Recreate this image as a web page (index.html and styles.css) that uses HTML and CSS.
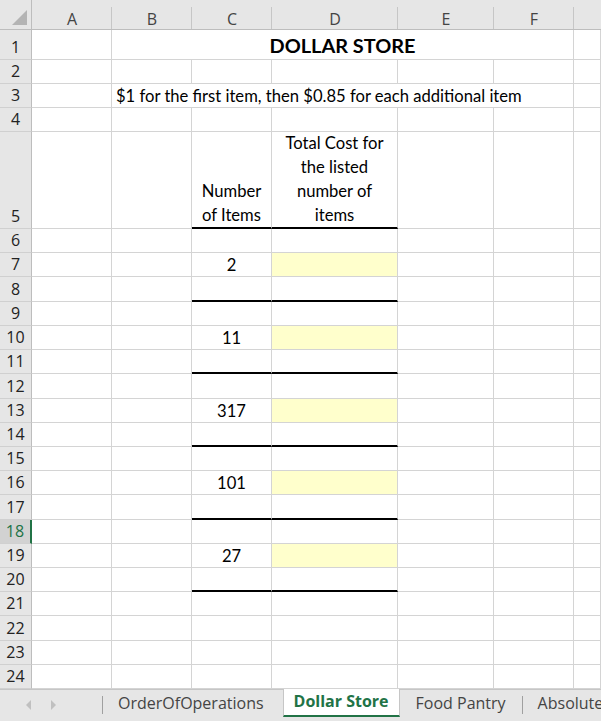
FILE: index.html
```html
<!DOCTYPE html>
<html>
<head>
<meta charset="utf-8">
<link rel="stylesheet" href="styles.css">
</head>
<body>
<div class="sheet">
  <div class="corner"><span class="tri"></span></div>
  <div class="ch">A</div><div class="ch">B</div><div class="ch">C</div><div class="ch">D</div><div class="ch">E</div><div class="ch">F</div><div class="ch last"></div>

  <div class="rh">1</div><div class="c"></div><div class="c title">DOLLAR STORE</div><div class="c"></div>
  <div class="rh">2</div><div class="c"></div><div class="c"></div><div class="c"></div><div class="c"></div><div class="c"></div><div class="c"></div><div class="c"></div>
  <div class="rh">3</div><div class="c"></div><div class="c note">$1 for the first item, then $0.85 for each additional item</div><div class="c"></div>
  <div class="rh">4</div><div class="c"></div><div class="c"></div><div class="c"></div><div class="c"></div><div class="c"></div><div class="c"></div><div class="c"></div>
  <div class="rh">5</div><div class="c"></div><div class="c"></div><div class="c wrap bot">Number of Items</div><div class="c wrap bot">Total Cost for the listed number of items</div><div class="c"></div><div class="c"></div><div class="c"></div>
  <div class="rh">6</div><div class="c"></div><div class="c"></div><div class="c"></div><div class="c"></div><div class="c"></div><div class="c"></div><div class="c"></div>
  <div class="rh">7</div><div class="c"></div><div class="c"></div><div class="c num">2</div><div class="c yel"></div><div class="c"></div><div class="c"></div><div class="c"></div>
  <div class="rh">8</div><div class="c"></div><div class="c"></div><div class="c bot"></div><div class="c bot"></div><div class="c"></div><div class="c"></div><div class="c"></div>
  <div class="rh">9</div><div class="c"></div><div class="c"></div><div class="c"></div><div class="c"></div><div class="c"></div><div class="c"></div><div class="c"></div>
  <div class="rh">10</div><div class="c"></div><div class="c"></div><div class="c num">11</div><div class="c yel"></div><div class="c"></div><div class="c"></div><div class="c"></div>
  <div class="rh">11</div><div class="c"></div><div class="c"></div><div class="c bot"></div><div class="c bot"></div><div class="c"></div><div class="c"></div><div class="c"></div>
  <div class="rh">12</div><div class="c"></div><div class="c"></div><div class="c"></div><div class="c"></div><div class="c"></div><div class="c"></div><div class="c"></div>
  <div class="rh">13</div><div class="c"></div><div class="c"></div><div class="c num">317</div><div class="c yel"></div><div class="c"></div><div class="c"></div><div class="c"></div>
  <div class="rh">14</div><div class="c"></div><div class="c"></div><div class="c bot"></div><div class="c bot"></div><div class="c"></div><div class="c"></div><div class="c"></div>
  <div class="rh">15</div><div class="c"></div><div class="c"></div><div class="c"></div><div class="c"></div><div class="c"></div><div class="c"></div><div class="c"></div>
  <div class="rh">16</div><div class="c"></div><div class="c"></div><div class="c num">101</div><div class="c yel"></div><div class="c"></div><div class="c"></div><div class="c"></div>
  <div class="rh">17</div><div class="c"></div><div class="c"></div><div class="c bot"></div><div class="c bot"></div><div class="c"></div><div class="c"></div><div class="c"></div>
  <div class="rh sel">18</div><div class="c"></div><div class="c"></div><div class="c"></div><div class="c"></div><div class="c"></div><div class="c"></div><div class="c"></div>
  <div class="rh">19</div><div class="c"></div><div class="c"></div><div class="c num">27</div><div class="c yel"></div><div class="c"></div><div class="c"></div><div class="c"></div>
  <div class="rh">20</div><div class="c"></div><div class="c"></div><div class="c bot"></div><div class="c bot"></div><div class="c"></div><div class="c"></div><div class="c"></div>
  <div class="rh">21</div><div class="c"></div><div class="c"></div><div class="c"></div><div class="c"></div><div class="c"></div><div class="c"></div><div class="c"></div>
  <div class="rh">22</div><div class="c"></div><div class="c"></div><div class="c"></div><div class="c"></div><div class="c"></div><div class="c"></div><div class="c"></div>
  <div class="rh">23</div><div class="c"></div><div class="c"></div><div class="c"></div><div class="c"></div><div class="c"></div><div class="c"></div><div class="c"></div>
  <div class="rh">24</div><div class="c"></div><div class="c"></div><div class="c"></div><div class="c"></div><div class="c"></div><div class="c"></div><div class="c"></div>
</div>
<div class="tabbar">
  <div class="nav"><span class="arr left"></span><span class="arr right"></span></div>
  <div class="tab sep">OrderOfOperations</div>
  <div class="tab active">Dollar Store</div>
  <div class="tab">Food Pantry</div>
  <div class="tab sep">Absolute</div>
</div>
</body>
</html>
```
FILE: styles.css
```css
html, body {
  margin: 0;
  padding: 0;
  background: #ffffff;
  overflow: hidden;
}
body {
  width: 601px;
  height: 721px;
  font-family: "Lato", "Liberation Sans", sans-serif;
}
.sheet {
  display: grid;
  grid-template-columns: 32px 80px 80px 80px 126px 96px 80px 1fr;
  grid-template-rows: 30px 30px 24.1px 24.1px 24.1px 96.7px repeat(19, 24.23px);
  height: 689.4px;
  overflow: hidden;
}
.corner {
  background: #e6e6e6;
  border-right: 1px solid #bdbdbd;
  border-bottom: 1px solid #bdbdbd;
  box-sizing: border-box;
  position: relative;
}
.tri {
  position: absolute;
  right: 4px;
  bottom: 4px;
  width: 0;
  height: 0;
  border-left: 15px solid transparent;
  border-bottom: 15px solid #b4b4b4;
}
.ch {
  background: #e6e6e6;
  border-bottom: 1px solid #bdbdbd;
  box-sizing: border-box;
  display: flex;
  align-items: center;
  justify-content: center;
  padding-top: 8px;
  font-family: "Open Sans", "Noto Sans", sans-serif;
  font-size: 16px;
  color: #444444;
  position: relative;
}
.ch::after {
  content: "";
  position: absolute;
  right: 0;
  top: 7px;
  bottom: 0;
  width: 1px;
  background: #c6c6c6;
}
.ch.last::after { display: none; }
.rh {
  background: #e6e6e6;
  border-right: 1px solid #bdbdbd;
  border-bottom: 1px solid #d0d0d0;
  box-sizing: border-box;
  display: flex;
  align-items: flex-end;
  justify-content: center;
  padding-bottom: 1px;
  font-family: "Open Sans", "Noto Sans", sans-serif;
  font-size: 16px;
  color: #222222;
}
.rh.sel {
  background: #d2d2d2;
  color: #217346;
  border-right: 2px solid #217346;
}
.c {
  border-right: 1px solid #d4d4d4;
  border-bottom: 1px solid #d4d4d4;
  box-sizing: border-box;
  font-size: 16.6px;
  color: #000000;
  display: flex;
  align-items: flex-end;
  padding: 0 4px 1px 4px;
  white-space: nowrap;
}
.title {
  grid-column: span 5;
  justify-content: center;
  font-weight: bold;
  font-size: 19.9px;
  padding-bottom: 2px;
}
.note {
  grid-column: span 5;
}
.wrap {
  white-space: normal;
  text-align: center;
  justify-content: center;
  line-height: 24px;
  padding-bottom: 0;
}
.num {
  justify-content: center;
}
.bot {
  border-bottom: 2px solid #000000;
}
.yel {
  background: #ffffcc;
}
.tabbar {
  height: 32px;
  background: #e6e6e6;
  border-top: 1px solid #c6c6c6;
  box-sizing: border-box;
  display: flex;
  align-items: stretch;
  font-family: "Open Sans", "Noto Sans", sans-serif;
  font-size: 16px;
  color: #444444;
  white-space: nowrap;
}
.nav {
  width: 102px;
  flex-shrink: 0;
  display: flex;
  align-items: center;
  gap: 20px;
  padding-left: 26px;
  padding-bottom: 2px;
  box-sizing: border-box;
}
.arr {
  width: 0;
  height: 0;
  border-top: 5px solid transparent;
  border-bottom: 5px solid transparent;
}
.arr.left { border-right: 5px solid #c0c0c0; }
.arr.right { border-left: 5px solid #c0c0c0; }
.tab {
  flex-shrink: 0;
  display: flex;
  align-items: center;
  padding: 0 16px 6px 16px;
  position: relative;
}
.tab.sep::before {
  content: "";
  position: absolute;
  left: 0;
  top: 6px;
  bottom: 7px;
  width: 1px;
  background: #a0a0a0;
}
.tab.active {
  background: #ffffff;
  color: #217346;
  font-weight: bold;
  border-left: 1px solid #c6c6c6;
  border-right: 1px solid #c6c6c6;
  border-bottom: 2px solid #217346;
  margin-top: -1px;
  margin-left: 3px;
  margin-bottom: 4px;
  padding: 0 10px 2px 10px;
}
```
